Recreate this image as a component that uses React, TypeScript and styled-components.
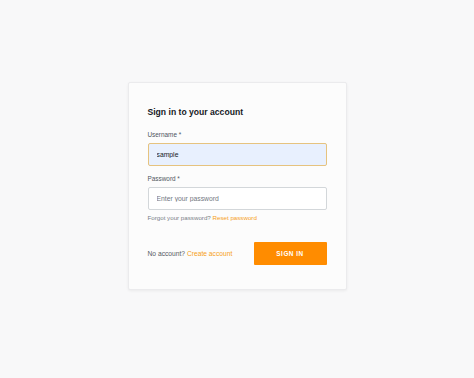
import React from 'react';
import styled, { createGlobalStyle } from 'styled-components';

const GlobalStyle = createGlobalStyle`
    html, body {
        margin: 0;
        padding: 0;
        background: #f8f8f9;
        font-family: "Liberation Sans", Arial, sans-serif;
    }
`;

const Page = styled.div`
    height: 378px;
    display: flex;
    justify-content: center;
    align-items: flex-start;
    padding-top: 82px;
    box-sizing: border-box;
`;

const Card = styled.form`
    width: 219px;
    box-sizing: border-box;
    padding: 24px 19px 24px 19px;
    background: #fcfcfc;
    border: 1px solid #ebebed;
    border-radius: 2px;
    box-shadow: 0 1px 3px rgba(0, 0, 0, 0.06);
    display: flex;
    flex-direction: column;
`;

const Title = styled.h1`
    margin: 0 0 14px 0;
    font-size: 8.6px;
    line-height: 10px;
    font-weight: bold;
    color: #16191f;
`;

const Field = styled.div<{ $gap: number }>`
    display: flex;
    flex-direction: column;
    gap: 4px;
    margin-bottom: ${p => p.$gap}px;
`;

const Label = styled.label`
    font-size: 6.4px;
    line-height: 8px;
    color: #4f565f;
`;

const Input = styled.input<{ $filled?: boolean }>`
    height: 23px;
    box-sizing: border-box;
    padding: 0 8px;
    font-family: "Liberation Sans", Arial, sans-serif;
    font-size: 6.8px;
    color: #16191f;
    border-radius: 2px;
    outline: none;
    border: 1px solid ${p => (p.$filled ? '#e6c37f' : '#d3d7da')};
    background: ${p => (p.$filled ? '#e8f0fe' : '#ffffff')};
    &::placeholder {
        color: #73787f;
    }
`;

const Hint = styled.div`
    font-size: 6.2px;
    line-height: 8px;
    color: #7b8189;
    margin-bottom: 20px;
`;

const Link = styled.a`
    color: #f6a01a;
    text-decoration: none;
    cursor: pointer;
`;

const Footer = styled.div`
    display: flex;
    align-items: center;
    justify-content: space-between;
`;

const FooterText = styled.span`
    font-size: 6.7px;
    color: #545b64;
`;

const Button = styled.button`
    width: 73px;
    height: 23px;
    border: none;
    border-radius: 1px;
    background: #ff8c00;
    color: #ffffff;
    font-family: "Liberation Sans", Arial, sans-serif;
    font-size: 6.4px;
    font-weight: bold;
    letter-spacing: 0.5px;
    cursor: pointer;
`;

const App = () => {
    return (
        <>
            <GlobalStyle />
            <Page>
                <Card onSubmit={e => e.preventDefault()}>
                    <Title>Sign in to your account</Title>
                    <Field $gap={9}>
                        <Label>Username *</Label>
                        <Input $filled defaultValue="sample" />
                    </Field>
                    <Field $gap={4}>
                        <Label>Password *</Label>
                        <Input type="password" placeholder="Enter your password" />
                    </Field>
                    <Hint>
                        Forgot your password? <Link>Reset password</Link>
                    </Hint>
                    <Footer>
                        <FooterText>
                            No account? <Link>Create account</Link>
                        </FooterText>
                        <Button type="submit">SIGN IN</Button>
                    </Footer>
                </Card>
            </Page>
        </>
    );
};

export default App;
